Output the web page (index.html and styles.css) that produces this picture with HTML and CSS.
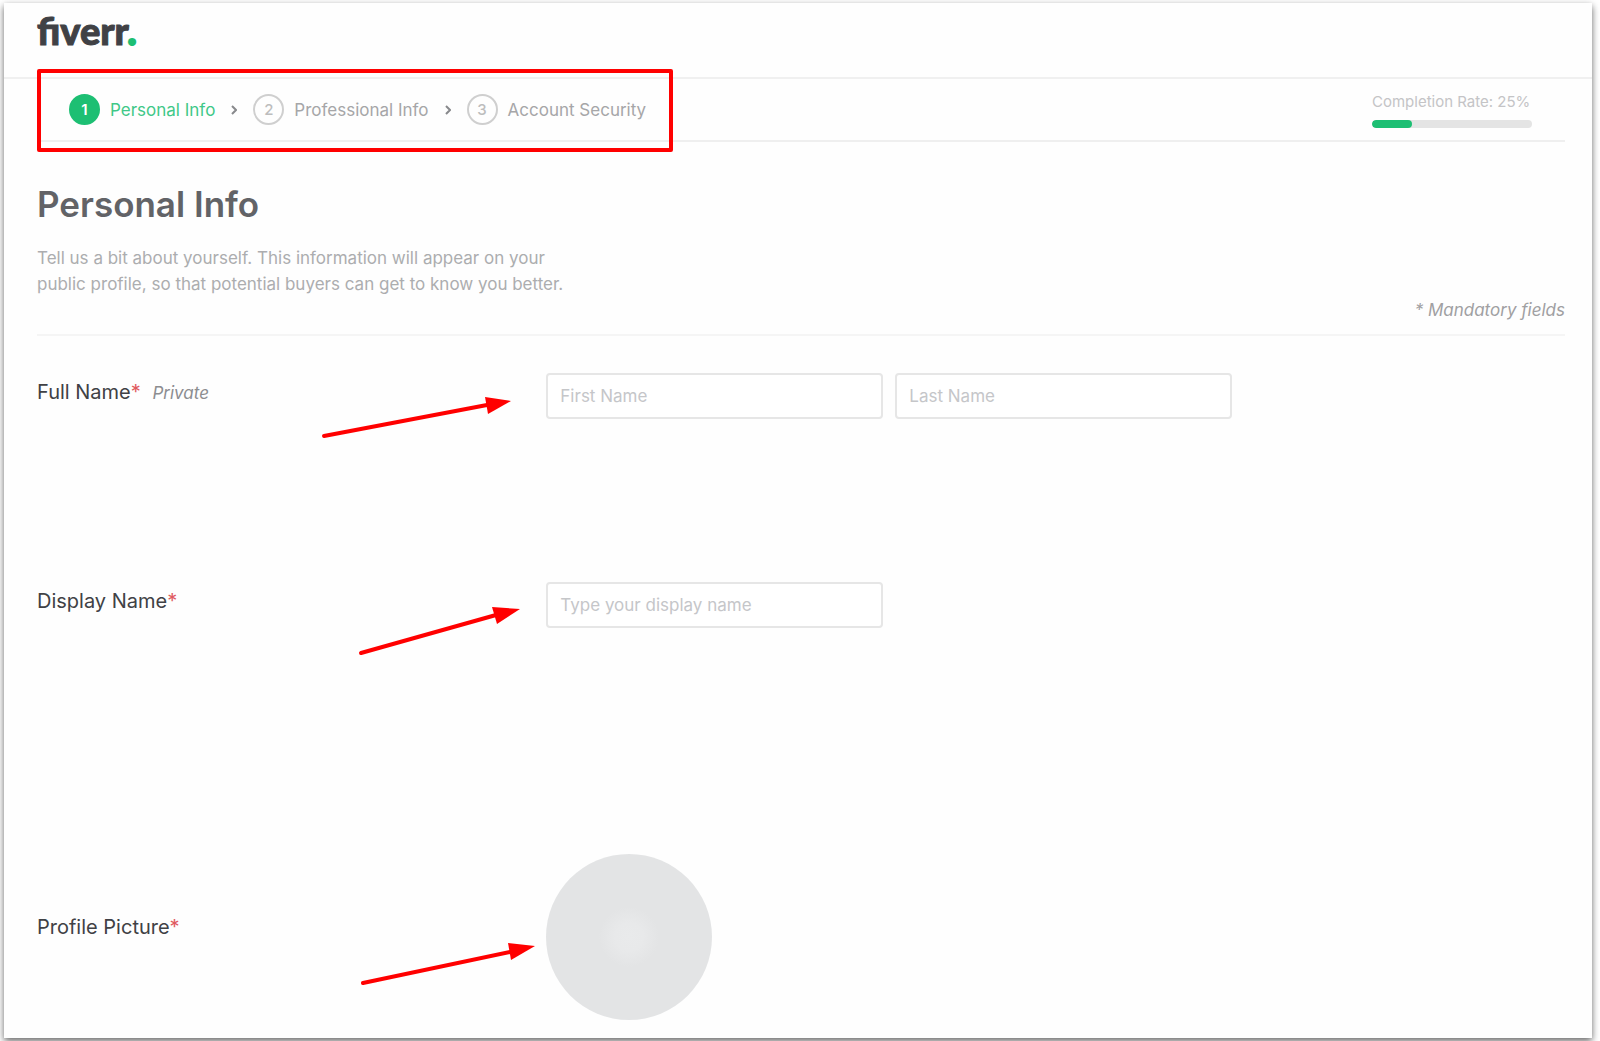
FILE: index.html
```html
<!DOCTYPE html>
<html lang="en">
<head>
  <meta charset="UTF-8">
  <meta name="viewport" content="width=device-width, initial-scale=1.0">
  <title>Personal Info | fiverr</title>
  <link rel="stylesheet" href="styles.css">
</head>
<body>
  <div class="page">
    <header class="header">
      <a class="logo" href="#">fiverr<span class="logo-dot">.</span></a>
    </header>
    <main class="content">
      <div class="steps-bar">
        <nav class="steps">
          <a class="step active" href="#"><span class="step-number">1</span>Personal Info</a>
          <svg class="chevron" viewBox="0 0 6 10"><path d="M1 1l4 4-4 4"/></svg>
          <a class="step" href="#"><span class="step-number">2</span>Professional Info</a>
          <svg class="chevron" viewBox="0 0 6 10"><path d="M1 1l4 4-4 4"/></svg>
          <a class="step" href="#"><span class="step-number">3</span>Account Security</a>
        </nav>
        <div class="completion">
          <span>Completion Rate: 25%</span>
          <div class="progress"><div class="progress-fill" style="width: 25%"></div></div>
        </div>
        <div class="highlight"></div>
      </div>

      <section class="intro">
        <h1>Personal Info</h1>
        <p>Tell us a bit about yourself. This information will appear on your public profile, so that potential buyers can get to know you better.</p>
        <div class="mandatory">* Mandatory fields</div>
      </section>

      <form class="form">
        <div class="row row-name">
          <div class="row-label">
            <label for="firstName">Full Name<span class="star">*</span></label>
            <em>Private</em>
          </div>
          <div class="fields">
            <input type="text" id="firstName" placeholder="First Name">
            <input type="text" id="lastName" placeholder="Last Name" aria-label="Last Name">
            <svg class="arrow arrow-name" width="190" height="42" viewBox="0 0 190 42">
              <path class="arrow-line" d="M3 39L166 8"/>
              <path class="arrow-head" d="M190 4L164 0L167 17z"/>
            </svg>
          </div>
        </div>
        <div class="row row-display">
          <div class="row-label">
            <label for="displayName">Display Name<span class="star">*</span></label>
          </div>
          <div class="fields">
            <input type="text" id="displayName" placeholder="Type your display name">
            <svg class="arrow arrow-display" width="162" height="50" viewBox="0 0 162 50">
              <path class="arrow-line" d="M3 46L138 8"/>
              <path class="arrow-head" d="M162 2L134 0L139 17z"/>
            </svg>
          </div>
        </div>
        <div class="row row-picture">
          <div class="row-label">
            <span>Profile Picture<span class="star">*</span></span>
          </div>
          <div class="fields">
            <button type="button" class="picture" aria-label="Upload profile picture"></button>
            <svg class="arrow arrow-picture" width="175" height="44" viewBox="0 0 175 44">
              <path class="arrow-line" d="M3 40L150 9"/>
              <path class="arrow-head" d="M175 3L148 0L151 17z"/>
            </svg>
          </div>
        </div>
      </form>
    </main>
  </div>
</body>
</html>
```
FILE: styles.css
```css
* {
  box-sizing: border-box;
}
body {
  margin: 0;
  padding: 3px 8px 3px 4px;
  background: #fff;
  font-family: Inter, "Liberation Sans", sans-serif;
  font-size: 17px;
  color: #404145;
}
.page {
  min-height: calc(100vh - 6px);
  background: #fefefe;
  box-shadow: 0 3px 7px rgba(0, 0, 0, 0.6);
}
.header {
  height: 76px;
  padding: 4px 33px;
  border-bottom: 2px solid #f0f0f0;
}
.logo {
  font-family: Lato, sans-serif;
  font-size: 38px;
  font-weight: 900;
  line-height: 46px;
  color: #404145;
  text-decoration: none;
  -webkit-text-stroke: 1px currentColor;
}
.logo-dot {
  color: #1dbf73;
  -webkit-text-stroke: 2px currentColor;
}
.content {
  padding: 0 27px 18px 33px;
}

/* steps */
.steps-bar {
  position: relative;
  display: flex;
  justify-content: space-between;
  align-items: center;
  height: 63px;
  padding: 0 33px 0 32px;
  border-bottom: 2px solid #efefef;
}
.steps {
  display: flex;
  align-items: center;
  gap: 16px;
}
.step {
  display: flex;
  align-items: center;
  gap: 10px;
  color: #a6a6a8;
  text-decoration: none;
}
.step-number {
  display: flex;
  align-items: center;
  justify-content: center;
  width: 31px;
  height: 31px;
  border: 2px solid #cfcfcf;
  border-radius: 50%;
  font-size: 15px;
  font-weight: 500;
  color: #bdbdbd;
}
.step.active {
  color: #3fc888;
}
.step.active .step-number {
  border-color: #1dbf73;
  background: #1dbf73;
  color: #fff;
  font-weight: 600;
}
.chevron {
  width: 6px;
  height: 10px;
  fill: none;
  stroke: #88898c;
  stroke-width: 2;
}
.completion {
  width: 160px;
  font-size: 15px;
  line-height: 20px;
  color: #c4c4c6;
  white-space: nowrap;
}
.progress {
  height: 8px;
  margin-top: 8px;
  border-radius: 4px;
  background: #e4e4e4;
  overflow: hidden;
}
.progress-fill {
  height: 100%;
  border-radius: 4px;
  background: #1dbf73;
}
.highlight {
  position: absolute;
  top: -10px;
  left: 0;
  width: 636px;
  height: 83px;
  border: 4px solid #f00;
  border-radius: 2px;
  pointer-events: none;
}

/* intro */
.intro {
  padding-top: 41px;
  border-bottom: 2px solid #f5f5f5;
}
h1 {
  margin: 0 0 20px;
  font-size: 35px;
  font-weight: 600;
  line-height: 42px;
  color: #626367;
}
.intro p {
  max-width: 530px;
  margin: 0;
  line-height: 26px;
  color: #acadaf;
}
.mandatory {
  padding-bottom: 11px;
  line-height: 26px;
  font-style: italic;
  text-align: right;
  color: #a0a0a2;
}

/* form */
.form {
  padding-top: 37px;
}
.row {
  display: grid;
  grid-template-columns: 1fr 2fr;
}
.row-name {
  min-height: 209px;
}
.row-display {
  min-height: 272px;
}
.row-label {
  padding-top: 7px;
  font-size: 20px;
  line-height: 24px;
}
.row-label em {
  margin-left: 6px;
  font-size: 17px;
  color: #8c8d90;
}
.row-picture .row-label {
  padding-top: 61px;
}
.star {
  color: #e05a5f;
}
.fields {
  position: relative;
  display: flex;
  align-items: flex-start;
  gap: 12px;
}
.fields input {
  width: 337px;
  height: 46px;
  padding: 0 12px;
  border: 2px solid #e6e6e6;
  border-radius: 4px;
  background: #fff;
  font-family: inherit;
  font-size: 17px;
  color: #404145;
}
.fields input::placeholder {
  color: #c5c6c9;
}
.picture {
  width: 166px;
  height: 166px;
  padding: 0;
  border: none;
  border-radius: 50%;
  background: radial-gradient(circle, #e9eaeb 0, #e8e9ea 14px, #e3e4e5 30px);
}

/* pointer arrows */
.arrow {
  position: absolute;
  right: 100%;
}
.arrow-name {
  top: 24px;
  margin-right: 35px;
}
.arrow-display {
  top: 25px;
  margin-right: 26px;
}
.arrow-picture {
  top: 89px;
  margin-right: 11px;
}
.arrow-line {
  fill: none;
  stroke: #f00;
  stroke-width: 4;
  stroke-linecap: round;
}
.arrow-head {
  fill: #f00;
}
```
